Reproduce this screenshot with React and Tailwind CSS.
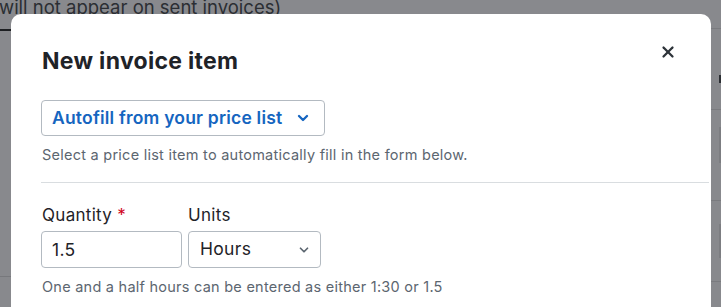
import { X, ChevronDown } from 'lucide-react'

// what shows of the page behind the dimmed overlay
function Backdrop() {
  return (
    <div className="absolute inset-0">
      <p className="-mt-[6px] -ml-[1px] whitespace-nowrap text-[18.5px] text-[#2b2e33]">
        will not appear on sent invoices)
      </p>
      <div className="absolute left-0 top-[29px] h-[2px] w-[12px] bg-[#1d1f22]" />
      <div className="absolute left-0 top-[276px] h-px w-[12px] bg-[#77787c]" />
      <div className="absolute right-0 top-[28px] h-px w-[10px] bg-[#7a7b7f]" />
      <div className="absolute right-0 top-[75px] h-[8px] w-[2px] bg-[#2b2e33]" />
      <div className="absolute right-0 top-[109px] h-px w-[10px] bg-[#7a7b7f]" />
      <div className="absolute right-0 top-[127px] h-[36px] w-[2px] bg-[#7c7d81]" />
      <div className="absolute right-0 top-[200px] h-px w-[10px] bg-[#7a7b7f]" />
      <div className="absolute right-0 top-[224px] h-[34px] w-[2px] bg-[#7c7d81]" />
      <div className="absolute right-0 top-[281px] h-px w-[10px] bg-[#7a7b7f]" />
    </div>
  )
}

function App() {
  return (
    <div className="relative h-[307px] w-[721px] overflow-hidden bg-[#88898d] font-['Inter',sans-serif] text-[#1f2328]">
      <Backdrop />
      <div className="relative ml-[11px] mt-[14px] h-[320px] w-[700px] rounded-t-[10px] bg-white px-[31px] pt-[33px]">
        <button className="absolute right-[34px] top-[29px] text-[#2d3339]" type="button">
          <X size={18} strokeWidth={3} />
        </button>

        <h2 className="text-[23px] font-bold leading-[28px] tracking-[0.3px] text-[#1f2328]">New invoice item</h2>

        <button
          type="button"
          className="mt-[25px] -ml-px flex h-[36px] w-[284px] items-center gap-[13px] rounded-[4px] border border-[#b3bac1] pl-[10px] text-[17.5px] font-semibold tracking-[0.2px] text-[#1565c0]"
        >
          Autofill from your price list
          <ChevronDown size={16} strokeWidth={3.5} />
        </button>
        <p className="mt-[9px] text-[14.5px] leading-[20px] tracking-[0.25px] text-[#5c6670]">
          Select a price list item to automatically fill in the form below.
        </p>

        <div className="mt-[17px] -ml-px h-px w-[668px] bg-[#d9dde0]" />

        <div className="mt-[21px] -ml-px flex gap-[6px]">
          <label className="flex w-[141px] flex-col">
            <span className="pl-px text-[17px] leading-[22px] tracking-[0.3px] text-[#1f2328]">
              Quantity <span className="text-[#d0021b]">*</span>
            </span>
            <input
              defaultValue="1.5"
              className="mt-[5px] h-[37px] rounded-[4px] border border-[#b3bac1] px-[10px] text-[17.5px] tracking-[0.3px] text-[#1f2328] outline-none"
            />
          </label>
          <label className="flex w-[133px] flex-col">
            <span className="text-[17px] leading-[22px] tracking-[0.3px] text-[#1f2328]">Units</span>
            <div className="mt-[5px] flex h-[37px] items-center justify-between rounded-[4px] border border-[#b3bac1] pl-[11px] pr-[9px] text-[17.5px] tracking-[0.3px]">
              Hours
              <ChevronDown size={14} strokeWidth={3} className="text-[#5c6670]" />
            </div>
          </label>
        </div>
        <p className="mt-[9px] text-[14.5px] leading-[20px] tracking-[0.25px] text-[#5c6670]">
          One and a half hours can be entered as either 1:30 or 1.5
        </p>
      </div>
    </div>
  )
}

export default App
